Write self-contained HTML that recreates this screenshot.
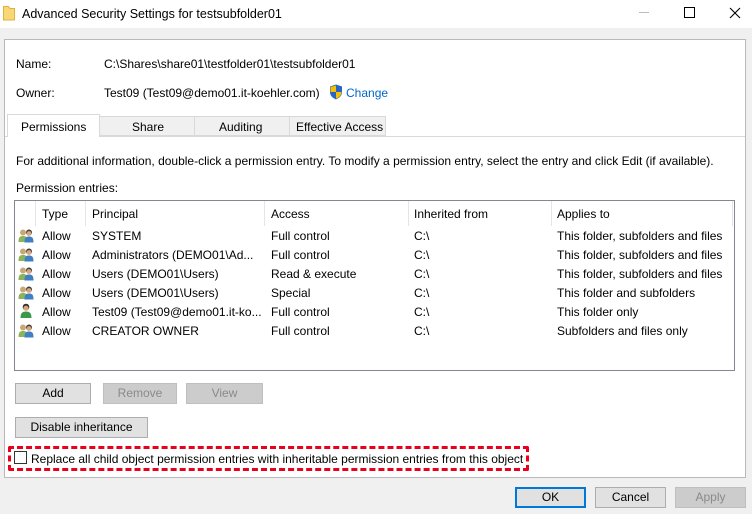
<!DOCTYPE html>
<html><head><meta charset="utf-8">
<style>
*{box-sizing:border-box;margin:0;padding:0}
body{width:752px;height:514px;background:#f0f0f0;font-family:"Liberation Sans",sans-serif;font-size:12px;color:#000;position:relative;overflow:hidden}
.a{position:absolute;white-space:nowrap}
.btn{position:absolute;background:#e1e1e1;border:1px solid #adadad;text-align:center;line-height:19px}
.dis{background:#cccccc;border-color:#bfbfbf;color:#8a8a8a}
.sep{position:absolute;top:201px;width:1px;height:25px;background:#e5e5e5}
</style></head><body>
<div class="a" style="left:0;top:0;width:752px;height:28px;background:#fff"></div>
<svg class="a" style="left:3px;top:5px" width="12" height="16"><path d="M0.5 1.5h5l1.5 2h4.5v11.5h-11z" fill="#f8d775" stroke="#e0b040"/></svg>
<div class="a" style="left:22px;top:7px;font-size:12.5px">Advanced Security Settings for testsubfolder01</div>
<div class="a" style="left:639px;top:12px;width:10px;height:1px;background:#bbb"></div>
<div class="a" style="left:684px;top:7px;width:11px;height:11px;border:1px solid #000"></div>
<svg class="a" style="left:729px;top:7px" width="12" height="12"><path d="M1 1L11 11M11 1L1 11" stroke="#000" stroke-width="1.1"/></svg>

<div class="a" style="left:4px;top:39px;width:742px;height:439px;background:#fff;border:1px solid #b9b9b9"></div>
<div class="a" style="left:16px;top:57px">Name:</div>
<div class="a" style="left:104px;top:57px">C:\Shares\share01\testfolder01\testsubfolder01</div>
<div class="a" style="left:16px;top:86px">Owner:</div>
<div class="a" style="left:104px;top:86px">Test09 (Test09@demo01.it-koehler.com)</div>
<svg class="a" style="left:329px;top:84px" width="14" height="16"><path d="M7 0.5L13 2.5V8C13 12 10 14 7 15.5C4 14 1 12 1 8V2.5Z" fill="#2a64c5"/><path d="M7 1.5V8H1.5V3ZM7 8H12.5C12.3 11.5 10 13.5 7 14.8Z" fill="#f5c000"/></svg>
<div class="a" style="left:346px;top:86px;color:#0066cc">Change</div>

<div class="a" style="left:99px;top:116px;width:287px;height:20px;background:#f0f0f0;border:1px solid #d9d9d9"></div>
<div class="a" style="left:194px;top:116px;width:1px;height:20px;background:#d9d9d9"></div>
<div class="a" style="left:289px;top:116px;width:1px;height:20px;background:#d9d9d9"></div>
<div class="a" style="left:5px;top:136px;width:740px;height:1px;background:#d9d9d9"></div>
<div class="a" style="left:7px;top:114px;width:93px;height:23px;background:#fff;border:1px solid #d9d9d9;border-bottom:none"></div>
<div class="a" style="left:21px;top:120px">Permissions</div>
<div class="a" style="left:132px;top:120px">Share</div>
<div class="a" style="left:219px;top:120px">Auditing</div>
<div class="a" style="left:296px;top:120px">Effective Access</div>

<div class="a" style="left:16px;top:154px">For additional information, double-click a permission entry. To modify a permission entry, select the entry and click Edit (if available).</div>
<div class="a" style="left:16px;top:181px">Permission entries:</div>

<div class="a" style="left:14px;top:200px;width:721px;height:171px;border:1px solid #828790;background:#fff"></div>
<div class="sep" style="left:35px"></div><div class="sep" style="left:85px"></div><div class="sep" style="left:264px"></div><div class="sep" style="left:408px"></div><div class="sep" style="left:551px"></div><div class="sep" style="left:732px"></div>
<div class="a" style="left:42px;top:207px">Type</div>
<div class="a" style="left:92px;top:207px">Principal</div>
<div class="a" style="left:271px;top:207px">Access</div>
<div class="a" style="left:414px;top:207px">Inherited from</div>
<div class="a" style="left:557px;top:207px">Applies to</div>

<svg width="0" height="0" style="position:absolute"><defs>
<g id="grp"><circle cx="5" cy="4.5" r="3" fill="#c9a878"/><path d="M0.5 14C0.5 9 2 8 5 8S9.5 9 9.5 14Z" fill="#8bb35a"/><circle cx="11" cy="4.5" r="3" fill="#3d3d3d"/><circle cx="11" cy="5.5" r="2.4" fill="#d9a57a"/><path d="M6.5 14.5C6.5 9.5 8 8.5 11 8.5S15.5 9.5 15.5 14.5Z" fill="#3f7fc4"/></g>
<g id="usr"><circle cx="7" cy="4" r="3.3" fill="#2e2e2e"/><circle cx="7" cy="5.2" r="2.6" fill="#d9a57a"/><path d="M1.5 15C1.5 10 3.5 8.5 7 8.5S12.5 10 12.5 15Z" fill="#3a9a4a"/></g>
</defs></svg>

<div class="a" style="left:18px;top:228px"><svg width="16" height="15"><use href="#grp"/></svg></div>
<div class="a" style="left:18px;top:247px"><svg width="16" height="15"><use href="#grp"/></svg></div>
<div class="a" style="left:18px;top:266px"><svg width="16" height="15"><use href="#grp"/></svg></div>
<div class="a" style="left:18px;top:285px"><svg width="16" height="15"><use href="#grp"/></svg></div>
<div class="a" style="left:19px;top:303px"><svg width="16" height="16"><use href="#usr"/></svg></div>
<div class="a" style="left:18px;top:323px"><svg width="16" height="15"><use href="#grp"/></svg></div>

<div class="a" style="left:42px;top:227px;line-height:19px">Allow<br>Allow<br>Allow<br>Allow<br>Allow<br>Allow</div>
<div class="a" style="left:92px;top:227px;line-height:19px">SYSTEM<br>Administrators (DEMO01\Ad...<br>Users (DEMO01\Users)<br>Users (DEMO01\Users)<br>Test09 (Test09@demo01.it-ko...<br>CREATOR OWNER</div>
<div class="a" style="left:271px;top:227px;line-height:19px">Full control<br>Full control<br>Read &amp; execute<br>Special<br>Full control<br>Full control</div>
<div class="a" style="left:414px;top:227px;line-height:19px">C:\<br>C:\<br>C:\<br>C:\<br>C:\<br>C:\</div>
<div class="a" style="left:557px;top:227px;line-height:19px">This folder, subfolders and files<br>This folder, subfolders and files<br>This folder, subfolders and files<br>This folder and subfolders<br>This folder only<br>Subfolders and files only</div>

<div class="btn" style="left:15px;top:383px;width:76px;height:21px">Add</div>
<div class="btn dis" style="left:103px;top:383px;width:74px;height:21px">Remove</div>
<div class="btn dis" style="left:186px;top:383px;width:77px;height:21px">View</div>
<div class="btn" style="left:15px;top:417px;width:133px;height:21px">Disable inheritance</div>

<div class="a" style="left:8px;top:446px;width:521px;height:25px;border:3px dashed #e8001c;border-radius:2px"></div>
<div class="a" style="left:14px;top:451px;width:13px;height:13px;border:1px solid #333;background:#fff"></div>
<div class="a" style="left:31px;top:452px">Replace all child object permission entries with inheritable permission entries from this object</div>

<div class="btn" style="left:515px;top:487px;width:71px;height:21px;border:2px solid #0078d7;line-height:17px">OK</div>
<div class="btn" style="left:595px;top:487px;width:71px;height:21px">Cancel</div>
<div class="btn dis" style="left:675px;top:487px;width:71px;height:21px">Apply</div>
</body></html>
